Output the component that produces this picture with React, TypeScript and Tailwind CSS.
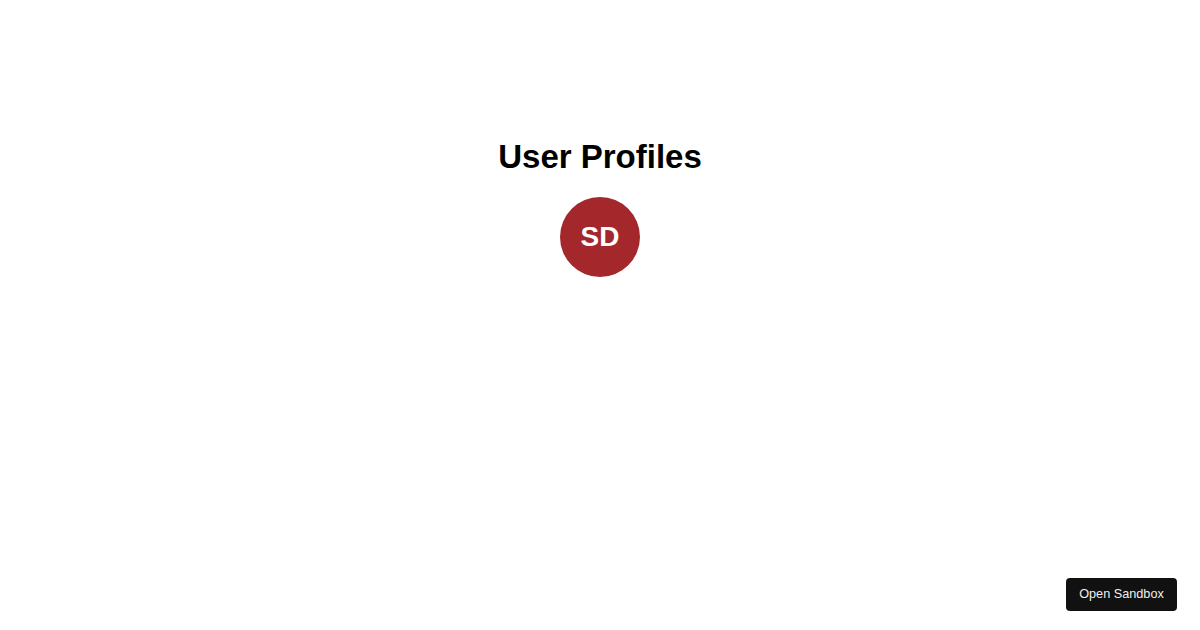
export default function App() {
  return (
    <div className="relative h-[630px] w-full bg-white font-['Liberation_Sans',Arial,sans-serif]">
      <div className="flex flex-col items-center pt-[138px]">
        <h1 className="text-[33px] font-bold leading-[38px] text-black">User Profiles</h1>
        <div className="mt-[21px] flex h-20 w-20 items-center justify-center rounded-full bg-[#a4282b]">
          <span className="text-[28px] font-bold text-white">SD</span>
        </div>
      </div>
      <button className="absolute bottom-[19px] right-[23px] h-[33px] w-[111px] rounded-[4px] bg-[#111111] text-[12.7px] text-[#f0f0f0]">
        Open Sandbox
      </button>
    </div>
  );
}
